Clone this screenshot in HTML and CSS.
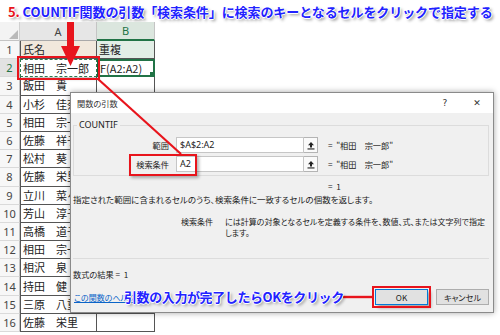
FILE: index.html
```html
<!DOCTYPE html>
<html lang="ja">
<head>
<meta charset="utf-8">
<title>COUNTIF 検索条件</title>
<link rel="stylesheet" href="styles.css">
</head>
<body>
<div class="page">
  <h1 class="title"><span class="num">5.</span> COUNTIF関数の引数「検索条件」に検索のキーとなるセルをクリックで指定する</h1>

  <div class="sheet">
    <div class="corner"><svg width="12" height="12" viewBox="0 0 12 12"><polygon points="11,2 11,11 2,11" fill="#b9b9b9"/></svg></div>
    <div class="colhead">A</div>
    <div class="colhead sel">B</div>

    <div class="rh">1</div><div class="cell a h1">氏名</div><div class="cell b h2">重複</div>
    <div class="rh sel">2</div><div class="cell a a2">相田　宗一郎</div><div class="cell b b2">F(A2:A2)</div>
    <div class="rh">3</div><div class="cell a">飯田　貴</div><div class="cell b"></div>
    <div class="rh">4</div><div class="cell a">小杉　佳奈</div><div class="cell b"></div>
    <div class="rh">5</div><div class="cell a">相田　宗一郎</div><div class="cell b"></div>
    <div class="rh">6</div><div class="cell a">佐藤　祥子</div><div class="cell b"></div>
    <div class="rh">7</div><div class="cell a">松村　葵</div><div class="cell b"></div>
    <div class="rh">8</div><div class="cell a">佐藤　栄里</div><div class="cell b"></div>
    <div class="rh">9</div><div class="cell a">立川　菜々</div><div class="cell b"></div>
    <div class="rh">10</div><div class="cell a">芳山　淳子</div><div class="cell b"></div>
    <div class="rh">11</div><div class="cell a">高橋　道子</div><div class="cell b"></div>
    <div class="rh">12</div><div class="cell a">相田　宗一郎</div><div class="cell b"></div>
    <div class="rh">13</div><div class="cell a">相沢　泉</div><div class="cell b"></div>
    <div class="rh">14</div><div class="cell a">持田　健</div><div class="cell b"></div>
    <div class="rh">15</div><div class="cell a">三原　八重</div><div class="cell b"></div>
    <div class="rh">16</div><div class="cell a">佐藤　栄里</div><div class="cell b"></div>
  </div>

  <div class="dialog">
    <div class="dlg-title">
      <span class="dlg-name">関数の引数</span>
      <span class="dlg-ctrl help">?</span>
      <span class="dlg-ctrl">✕</span>
    </div>
    <div class="dlg-body">
      <fieldset class="args">
        <legend>COUNTIF</legend>
        <div class="arg-row">
          <span class="arg-label">範囲</span>
          <span class="arg-input">$A$2:A2</span>
          <span class="ref-btn"><svg width="8" height="9" viewBox="0 0 8 9"><path d="M4 1 L1 4.2 H3 V6.5 H5 V4.2 H7 Z" fill="#222"/><rect x="0.5" y="7.4" width="7" height="1.1" fill="#222"/></svg></span>
          <span class="arg-val">= &nbsp;"相田　宗一郎"</span>
        </div>
        <div class="arg-row">
          <span class="arg-label">検索条件</span>
          <span class="arg-input">A2</span>
          <span class="ref-btn"><svg width="8" height="9" viewBox="0 0 8 9"><path d="M4 1 L1 4.2 H3 V6.5 H5 V4.2 H7 Z" fill="#222"/><rect x="0.5" y="7.4" width="7" height="1.1" fill="#222"/></svg></span>
          <span class="arg-val">= &nbsp;"相田　宗一郎"</span>
        </div>
      </fieldset>
      <div class="result-line">= &nbsp;1</div>
      <p class="desc">指定された範囲に含まれるセルのうち、検索条件に一致するセルの個数を返します。</p>
      <div class="arg-help">
        <span class="help-name">検索条件</span>
        <span class="help-text">には計算の対象となるセルを定義する条件を、数値、式、または文字列で指定します。</span>
      </div>
      <div class="formula-result">数式の結果 = &nbsp;1</div>
      <div class="dlg-footer">
        <a class="help-link" href="#">この関数のヘルプ</a>
        <button class="btn ok">OK</button>
        <button class="btn">キャンセル</button>
      </div>
    </div>
  </div>

  <div class="mark-box"></div>

  <svg class="annot" width="500" height="335" viewBox="0 0 500 335">
    <rect x="67" y="22" width="7" height="26" fill="#e8141c"/>
    <polygon points="61,46 80,46 70.5,66" fill="#e8141c"/>
    <line x1="98" y1="79" x2="181" y2="154" stroke="#e8141c" stroke-width="2.2"/>
    <line x1="343" y1="297" x2="372" y2="297" stroke="#e8141c" stroke-width="2.4"/>
  </svg>

  <div class="callout">引数の入力が完了したらOKをクリック</div>
</div>
</body>
</html>
```

FILE: styles.css
```css
* { box-sizing: border-box; }
html, body { margin: 0; padding: 0; }
body {
  width: 500px;
  height: 335px;
  overflow: hidden;
  background: #fff;
  font-family: "Noto Sans CJK JP", sans-serif;
}
.page {
  position: relative;
  width: 500px;
  height: 335px;
}

/* heading */
.title {
  margin: 0;
  height: 22px;
  padding: 3px 0 0 8px;
  font-family: "Noto Sans CJK JP", sans-serif;
  font-size: 13px;
  font-weight: bold;
  line-height: 17px;
  letter-spacing: -0.08px;
  color: #2222ff;
  white-space: nowrap;
  text-shadow: 1px 0 0 #fff, -1px 0 0 #fff, 0 1px 0 #fff, 0 -1px 0 #fff, 2px 2px 3px rgba(0,0,0,0.45);
}
.title .num { color: #e8141c; }

/* spreadsheet */
.sheet {
  display: grid;
  grid-template-columns: 20px 77px 58px;
  grid-template-rows: 19px repeat(16, 18.2px);
  font-size: 11px;
  line-height: 1;
  color: #222;
}
.corner {
  background: #f3f3f3;
  border-right: 1px solid #d0d0d0;
  border-bottom: 1px solid #c4c4c4;
  display: flex;
  align-items: flex-end;
  justify-content: flex-end;
}
.corner svg { display: block; }
.colhead {
  display: flex;
  align-items: center;
  justify-content: center;
  background: #e6e6e6;
  border-right: 1px solid #c4c4c4;
  border-bottom: 1px solid #a9a9a9;
  font-family: "Noto Sans", sans-serif;
  font-size: 11px;
  color: #444;
}
.colhead.sel {
  background: #dbe6de;
  color: #217346;
  border-bottom: 2px solid #217346;
}
.rh {
  display: flex;
  align-items: center;
  justify-content: center;
  background: #f7f7f7;
  border-right: 1px solid #c4c4c4;
  border-bottom: 1px solid #dadada;
  font-family: "Noto Sans", sans-serif;
  font-size: 11px;
  color: #444;
}
.rh.sel { background: #e2e2e2; color: #217346; }
.cell {
  display: flex;
  align-items: center;
  padding-left: 2px;
  border-right: 1px solid #555;
  border-bottom: 1px solid #555;
  white-space: nowrap;
  overflow: hidden;
}
.cell.a { border-left: 1px solid #555; }
.cell.h1 { background: #f1e8dc; }
.cell.h2 { background: #e2eee6; }
.cell.a2 {
  border: 1px dashed #2d7a4d;
  overflow: visible;
  outline: 2.5px solid #e8141c;
  outline-offset: 1px;
  position: relative;
  z-index: 1;
  box-shadow: 2px 2px 3px rgba(0,0,0,0.25);
}
.cell.b2 {
  border: 2px solid #217346;
  padding-left: 1px;
  position: relative;
}
.cell.b2::after {
  content: "";
  position: absolute;
  right: -3px;
  bottom: -3px;
  width: 5px;
  height: 5px;
  background: #217346;
  border: 1px solid #fff;
}

/* dialog window */
.dialog {
  position: absolute;
  left: 70px;
  top: 92px;
  width: 424px;
  height: 221px;
  border: 1px solid #8a8a8a;
  background: #f0f0f0;
  box-shadow: 0 0 6px rgba(0,0,0,0.35);
  display: flex;
  flex-direction: column;
  font-size: 8.2px;
  line-height: 11px;
  color: #222;
  z-index: 2;
}
.dlg-name, .arg-label, .arg-val, .desc, .arg-help, .formula-result, .help-link, .btn, .result-line {
  font-family: "Noto Sans CJK JP", sans-serif;
  font-feature-settings: "palt";
}
.dlg-title {
  height: 20px;
  background: #fff;
  display: flex;
  align-items: center;
  padding-left: 6px;
}
.dlg-name { font-size: 8.2px; color: #333; }
.dlg-ctrl {
  width: 32px;
  text-align: center;
  font-family: "DejaVu Sans", sans-serif;
  font-size: 9px;
  color: #333;
}
.dlg-ctrl.help { margin-left: auto; }
.dlg-body {
  flex: 1;
  display: flex;
  flex-direction: column;
  padding: 0 4px 7px 2px;
}
.args {
  margin: 6px 0 0;
  padding: 6px 0 3px;
  border: 1px solid #dcdcdc;
  min-width: 0;
}
.args legend {
  margin-left: 3px;
  padding: 0 2px;
  font-family: "Noto Sans", sans-serif;
  font-size: 9px;
  line-height: 12px;
  color: #222;
}
.arg-row {
  display: grid;
  grid-template-columns: 102px 128px 14px auto;
  align-items: center;
  height: 16px;
}
.arg-row + .arg-row { margin-top: 3px; }
.arg-label { text-align: right; padding-right: 7px; }
.arg-input {
  height: 16px;
  background: #fff;
  border: 1px solid #c6c6c6;
  padding: 0 3px;
  font-family: "Noto Sans", sans-serif;
  font-size: 9px;
  line-height: 14px;
}
.ref-btn {
  height: 16px;
  background: #fafafa;
  border: 1px solid #b4b4b4;
  border-left: none;
  display: flex;
  align-items: center;
  justify-content: center;
}
.arg-val { padding-left: 10px; white-space: nowrap; }
.result-line {
  margin-top: 5px;
  padding-left: 255px;
}
.desc { margin: 2px 0 0; white-space: nowrap; font-size: 8.5px; }
.arg-help {
  display: grid;
  grid-template-columns: 140px 1fr;
  column-gap: 12px;
  margin-top: 11px;
  font-size: 8px;
}
.help-name { text-align: right; }
.formula-result {
  margin-top: 20px;
  border-top: 1px solid #dcdcdc;
  padding-top: 10px;
}
.dlg-footer {
  margin-top: auto;
  display: flex;
  align-items: center;
}
.help-link {
  color: #0a64c8;
  text-decoration: underline;
  font-size: 8px;
  margin-left: 1px;
}
.btn {
  width: 53px;
  height: 16px;
  padding: 0;
  background: #e1e1e1;
  border: 1px solid #adadad;
  font-size: 8.2px;
  color: #222;
}
.btn.ok {
  margin-left: auto;
  border-color: #0078d7;
  outline: 2.5px solid #e8141c;
  outline-offset: 1.5px;
  box-shadow: 3px 3px 3px rgba(0,0,0,0.3);
}
.btn + .btn { margin-left: 8px; }

/* annotations */
.mark-box {
  position: absolute;
  left: 129px;
  top: 154px;
  width: 68px;
  height: 22px;
  border: 2.5px solid #e8141c;
  box-shadow: 2px 2px 3px rgba(0,0,0,0.3);
  z-index: 3;
}
.annot {
  position: absolute;
  left: 0;
  top: 0;
  z-index: 4;
  pointer-events: none;
}
.callout {
  position: absolute;
  left: 124px;
  top: 289px;
  font-size: 13px;
  font-weight: bold;
  line-height: 16px;
  letter-spacing: -0.4px;
  color: #2222ff;
  white-space: nowrap;
  z-index: 5;
  text-shadow: 1px 0 0 #fff, -1px 0 0 #fff, 0 1px 0 #fff, 0 -1px 0 #fff, 2px 2px 3px rgba(0,0,0,0.4);
}
```
